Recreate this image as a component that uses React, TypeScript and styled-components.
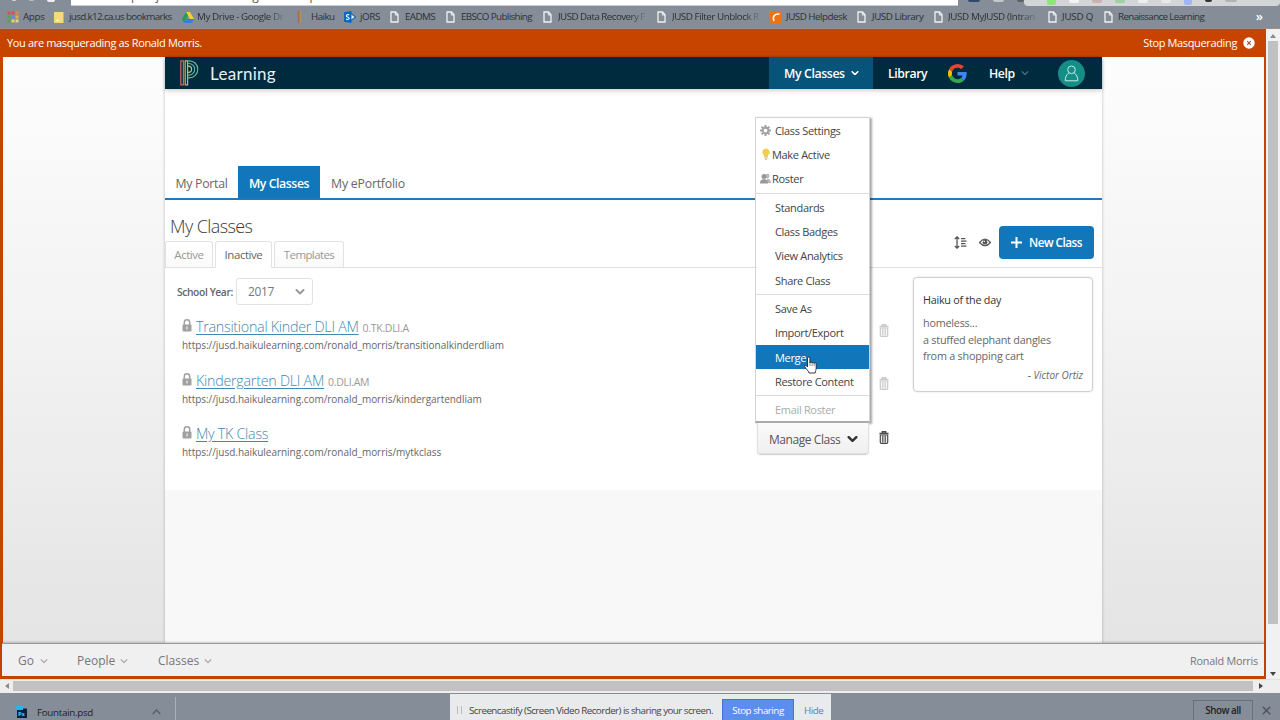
import React from "react";
import styled, { createGlobalStyle, css } from "styled-components";

const Global = createGlobalStyle`
  * { box-sizing: border-box; }
  html, body { margin: 0; padding: 0; }
  body { width: 1280px; height: 720px; overflow: hidden; font-family: "Open Sans", "Noto Sans", sans-serif; font-size: 11px; color: #555; }
`;

const Screen = styled.div`
  width: 1280px; height: 720px; overflow: hidden; display: flex; flex-direction: column; background: #858e98;
`;

/* ---------- browser top ---------- */
const AddressStrip = styled.div`
  height: 6px; flex: none; display: flex; align-items: flex-start; background: #858e98; overflow: hidden;
`;
const BrowserButtons = styled.div`width: 71px; height: 6px; padding-left: 12px; display: flex; gap: 13px;`;
const AddressField = styled.div`
  width: 887px; height: 6px; background: #fff; border-bottom: 1px solid #c3d0d4; position: relative; color: #555;
`;
const AddressText = styled.span`
  position: absolute; left: 44px; top: -12px; font-size: 12px; line-height: 15px; white-space: nowrap;
`;
const ExtensionIcons = styled.div`width: 66px; height: 6px; display: flex; gap: 13px; padding-left: 10px;`;
const ExtensionArea = styled.div`
  width: 256px; height: 6px; background: #d3d5d7; border-radius: 0 0 4px 4px;
  display: flex; align-items: flex-start; gap: 13px; padding-left: 23px;
`;
const Chip = styled.i<{ $c: string; $w?: number; $h?: number }>`
  width: ${p => p.$w ?? 10}px; height: ${p => p.$h ?? 3}px; background: ${p => p.$c}; border-radius: 0 0 2px 2px;
`;
const BookmarkBar = styled.div`
  height: 23px; flex: none; display: flex; align-items: center; padding: 0 0 0 7px; background: #858e98;
  border-bottom: 1px solid #a08c84;
`;
const Bookmark = styled.div<{ $w: number }>`
  width: ${p => p.$w}px; flex: none; display: flex; align-items: center; color: #2d3034;
`;
const BookmarkIcon = styled.span<{ $gap: number }>`
  width: ${p => p.$gap}px; flex: none; display: flex; svg { display: block; }
`;
const BookmarkLabel = styled.span<{ $ls: number; $fade?: boolean }>`
  font-size: 9.8px; line-height: 14px; letter-spacing: ${p => p.$ls}px; white-space: nowrap;
  ${p => p.$fade && css`mask-image: linear-gradient(to right, #000 82%, rgba(0,0,0,.25) 100%);`}
`;
const Overflow = styled.span`margin-left: auto; padding: 0 17px 2px 0; color: #fff; font-size: 13px; line-height: 14px; font-weight: 600;`;

const PageGlyph = () => (
  <svg width="9" height="12" viewBox="0 0 9 12"><path d="M1 1h4.500L8 3.800V11H1z" fill="none" stroke="#f0f1f2" strokeWidth="1.300" /><path d="M5.300 1v3H8" fill="none" stroke="#f0f1f2" /></svg>
);
const AppsGlyph = () => (
  <svg width="12" height="12" viewBox="0 0 12 12">
    {["#d9534a", "#d9534a", "#e08a4a", "#56a356", "#5f8fe0", "#e0b04a", "#56a356", "#f0d060", "#e6d68a"].map((c, i) => (
      <rect key={i} x={(i % 3) * 4 + 0.5} y={Math.floor(i / 3) * 4 + 0.5} width="3" height="3" fill={c} />
    ))}
  </svg>
);
const FolderGlyph = () => (
  <svg width="10" height="11" viewBox="0 0 10 11"><path d="M0 0h9.500v11H0z" fill="#f6d978" /><path d="M2 8.500h3" stroke="#fff6d0" /></svg>
);
const DriveGlyph = () => (
  <svg width="12" height="11" viewBox="0 0 12 11"><path d="M4 0h4l4 7H8z" fill="#f7cf3c" /><path d="M4 0 0 7l2 4 4-7.300z" fill="#1f9f5b" /><path d="M3.800 7H12l-2 4H2z" fill="#3f78e0" /></svg>
);
const HaikuGlyph = () => (
  <svg width="9" height="12" viewBox="0 0 9 12"><path d="M2.500 0v12" stroke="#a8695f" strokeWidth="1.600" /><path d="M4.500 0v12" stroke="#a59a62" /><path d="M5 1c4 0 4 6 0 6" stroke="#6d9c86" fill="none" /></svg>
);
const SharePointGlyph = () => (
  <svg width="12" height="12" viewBox="0 0 12 12"><path d="M7 2.500 11.500 6 7 9.500" fill="#fff" stroke="#1572c4" strokeWidth="1.400" /><path d="M0 1.200 7.500 0v12L0 10.800z" fill="#0668c0" /><path d="M5.300 4C3.800 3.200 2 4 2.500 5.200S5.600 6.500 5.200 7.600 3 8.600 2 7.900" fill="none" stroke="#fff" strokeWidth="1.100" /></svg>
);
const HelpdeskGlyph = () => (
  <svg width="12" height="12" viewBox="0 0 12 12"><rect width="12" height="12" rx="1" fill="#f4720e" /><path d="M4 10C2 5 5 2.500 9.500 3" fill="none" stroke="#fff" strokeWidth="1.500" /></svg>
);

type Mark = { label: string; w: number; gap: number; icon: React.FC; ls: number; fade?: boolean };
const marks: Mark[] = [
  { label: "Apps", w: 47, gap: 16, icon: AppsGlyph, ls: -0.35 },
  { label: "jusd.k12.ca.us bookmarks", w: 128, gap: 15, icon: FolderGlyph, ls: -0.64 },
  { label: "My Drive - Google Dr", w: 114, gap: 15, icon: DriveGlyph, ls: -0.4, fade: true },
  { label: "Haiku", w: 48, gap: 15, icon: HaikuGlyph, ls: -0.55 },
  { label: "jORS", w: 46, gap: 16, icon: SharePointGlyph, ls: -0.4 },
  { label: "EADMS", w: 56, gap: 15, icon: PageGlyph, ls: -0.6 },
  { label: "EBSCO Publishing", w: 97, gap: 15, icon: PageGlyph, ls: -0.62 },
  { label: "JUSD Data Recovery F", w: 114, gap: 15, icon: PageGlyph, ls: -0.55, fade: true },
  { label: "JUSD Filter Unblock R", w: 113, gap: 15, icon: PageGlyph, ls: -0.45, fade: true },
  { label: "JUSD Helpdesk", w: 87, gap: 16, icon: HelpdeskGlyph, ls: -0.5 },
  { label: "JUSD Library", w: 77, gap: 15, icon: PageGlyph, ls: -0.45 },
  { label: "JUSD MyJUSD (Intran", w: 114, gap: 14, icon: PageGlyph, ls: -0.37, fade: true },
  { label: "JUSD Q", w: 56, gap: 14, icon: PageGlyph, ls: -0.2 },
  { label: "Renaissance Learning", w: 110, gap: 14, icon: PageGlyph, ls: -0.64 },
];

/* ---------- web page frame ---------- */
const Viewport = styled.div`height: 650px; flex: none; display: flex;`;
const Site = styled.div`
  width: 1266px; height: 650px; display: flex; flex-direction: column; background: #c74400; padding: 0 2px 3px 3px;
`;
const MasqueradeBar = styled.div`
  height: 28px; flex: none; display: flex; align-items: center; justify-content: space-between;
  padding: 0 9px 1px 4px; color: #fff; font-size: 11px;
`;
const StopLink = styled.div`display: flex; align-items: center; gap: 6px;`;
const Label = styled.span<{ $ls?: number }>`letter-spacing: ${p => p.$ls ?? 0}px; white-space: nowrap;`;

const Backdrop = styled.div`
  height: 586px; flex: none; display: flex; justify-content: flex-start; padding-left: 162px;
  background: linear-gradient(#fdfdfd, #f3f3f3 45%, #e4e4e4);
`;
const Column = styled.div`
  width: 937px; height: 586px; background: #f8f8f8; box-shadow: 0 0 3px rgba(0,0,0,.25); position: relative; display: flex; flex-direction: column;
`;
const NavBar = styled.header`
  height: 32px; flex: none; background: #002b3e; display: flex; align-items: center; color: #fff; padding-left: 15px;
  font-size: 12.300px; font-weight: 600; box-shadow: 0 2px 4px rgba(0,0,0,.18); z-index: 1;
`;
const Brand = styled.div`display: flex; align-items: center; gap: 11px; width: 589px;`;
const BrandName = styled.span`font-family: Lato, sans-serif; font-weight: 400; font-size: 17px; line-height: 20px; letter-spacing: 0.3px; padding-top: 2px; color: #e8f0f2;`;
const NavItem = styled.div<{ $w: number; $pad: number; $active?: boolean; $gap?: number }>`
  width: ${p => p.$w}px; height: 32px; padding-left: ${p => p.$pad}px; display: flex; align-items: center; gap: ${p => p.$gap ?? 6}px;
  background: ${p => (p.$active ? "#065479" : "transparent")};
  svg { flex: none; }
`;
const Avatar = styled.div`
  width: 27px; height: 27px; border-radius: 50%; background: #138f86; display: flex; align-items: center; justify-content: center;
`;

const Main = styled.main`height: 401px; flex: none; background: #fff; display: flex; flex-direction: column;`;
const PortalTabs = styled.nav`
  margin-top: 77px; height: 34px; flex: none; display: flex; border-bottom: 2px solid #2478b4;
`;
const PortalTab = styled.div<{ $w: number; $active?: boolean }>`
  width: ${p => p.$w}px; height: 32px; display: flex; align-items: center; justify-content: center; padding-top: 2px;
  font-size: 12.300px; color: ${p => (p.$active ? "#fff" : "#666")}; background: ${p => (p.$active ? "#1276ba" : "transparent")};
  font-weight: ${p => (p.$active ? 600 : 400)};
`;
const TitleRow = styled.div`
  height: 68px; flex: none; display: flex; justify-content: space-between; border-bottom: 1px solid #dfdfdf;
`;
const TitleSide = styled.div`display: flex; flex-direction: column; justify-content: space-between; padding-top: 14px;`;
const Title = styled.h1`margin: 0 0 0 5px; font-weight: 300; font-size: 18px; line-height: 24px; color: #3a3a3a;`;
const SubTabs = styled.div`display: flex; gap: 2px; margin-bottom: -1px;`;
const SubTab = styled.div<{ $w: number; $active?: boolean }>`
  width: ${p => p.$w}px; height: 27px; border: 1px solid #e2e2e2; border-bottom-color: ${p => (p.$active ? "#fff" : "#dfdfdf")};
  border-radius: 3px 3px 0 0; background: ${p => (p.$active ? "#fff" : "linear-gradient(#fff,#fafafa)")};
  display: flex; align-items: center; justify-content: center; font-size: 11.500px; color: ${p => (p.$active ? "#666" : "#999")};
`;
const Tools = styled.div`display: flex; align-items: center; padding: 0 8px 0 0; height: 84px;`;
const EyeBox = styled.span`margin-left: 12px; display: flex;`;
const NewClass = styled.div`
  width: 95px; height: 33px; border-radius: 4px; background: #1276ba; color: #fff; font-size: 11.800px; font-weight: 600;
  display: flex; align-items: center; gap: 7px; padding-left: 12px; margin-left: 8px;
`;
const Body = styled.div`flex: 1; display: flex; justify-content: space-between;`;
const Listing = styled.section`width: 724px; padding: 10px 0 0 12px;`;
const YearRow = styled.div`display: flex; align-items: center; gap: 3px; height: 27px; margin-bottom: 11.300px; font-size: 10.300px; font-weight: 600; color: #666;`;
const YearSelect = styled.div`
  width: 77px; height: 27px; border: 1px solid #e2e2e2; border-radius: 3px; display: flex; align-items: center;
  justify-content: space-between; padding: 0 7px 0 11px; font-size: 12px; font-weight: 400; color: #777;
`;
const ClassRow = styled.article`height: 53.400px; display: flex; justify-content: space-between; padding-left: 5px;`;
const ClassInfo = styled.div`display: flex; flex-direction: column;`;
const ClassHead = styled.div`display: flex; align-items: baseline; height: 21px; line-height: 21px;`;
const LockBox = styled.span`width: 14px; svg { display: block; }`;
const ClassLink = styled.a`color: #3f88b3; font-size: 14.300px; font-weight: 300; text-decoration: underline; text-underline-offset: 2px;`;
const ClassCode = styled.span`margin-left: 4px; font-size: 10.500px; color: #999; letter-spacing: -0.3px;`;
const ClassUrl = styled.div`font-size: 10px; line-height: 16px; color: #666;`;
const TrashBox = styled.span<{ $dim?: boolean }>`color: ${p => (p.$dim ? "#c9c9c9" : "#4a4a4a")}; padding-top: 7.700px;`;

const HaikuCard = styled.aside`
  width: 180px; height: 115px; margin: 9px 9px 0 0; border: 1px solid #cfcfcf; border-radius: 4px; padding: 13px 9px 0;
  display: flex; flex-direction: column; box-shadow: 0 0 2px rgba(0,0,0,.15); color: #666; font-size: 10.800px; line-height: 16.500px; letter-spacing: -0.220px;
`;
const HaikuTitle = styled.div`color: #333; line-height: 17px; margin-bottom: 7px;`;
const HaikuLine = styled.div`white-space: nowrap;`;
const HaikuAuthor = styled.div`text-align: right; font-style: italic; font-size: 10px; letter-spacing: 0; margin-top: 2px;`;

/* ---------- class menu, floats over the page ---------- */
const MenuLayer = styled.div`position: absolute; left: 590px; top: 60px; width: 115px; z-index: 3;`;
const Menu = styled.div`
  border: 1px solid #d4d4d4; border-bottom: 2px solid #aaa; background: #fff; box-shadow: 2px 1px 2px rgba(0,0,0,.35); height: 306px;
  letter-spacing: -0.320px;
`;
const MenuItem = styled.div<{ $kind?: "active" | "muted"; $icon?: boolean }>`
  height: 24.400px; display: flex; align-items: center; font-size: 11px; padding: 0 0 .300px ${p => (p.$icon ? 4 : 19)}px;
  color: ${p => (p.$kind === "active" ? "#fff" : p.$kind === "muted" ? "#aaa" : "#444")};
  background: ${p => (p.$kind === "active" ? "#1276ba" : "transparent")};
`;
const MenuIcon = styled.span<{ $w: number }>`width: ${p => p.$w}px; display: flex;`;
const Rule = styled.div`height: 1px; margin: 1.400px 0; background: #dcdcdc;`;
const ManageButton = styled.div`
  margin-left: 2px; width: 112px; height: 31px; border: 1px solid #e0e0e0; border-top: 0; border-radius: 0 0 4px 4px; background: linear-gradient(#fafafa, #f0f0f0);
  box-shadow: 0 1px 1px #ccc; display: flex; align-items: center; gap: 7px; padding: 2px 0 0 11px; font-size: 12px; color: #555;
`;
const Pointer = styled.div`position: absolute; left: 49px; top: 239px;`;

/* ---------- bottom ---------- */
const Dock = styled.footer`
  height: 33px; flex: none; background: #f0f0f0; border-top: 1px solid #999; margin-left: -1px; box-shadow: 0 -1px 2px rgba(0,0,0,.2); z-index: 2;
  display: flex; align-items: center; padding: 0 6px 0 16px; font-size: 12px; color: #777;
`;
const DockItem = styled.div<{ $w: number; $gap: number }>`width: ${p => p.$w}px; display: flex; align-items: center; gap: ${p => p.$gap}px; svg { margin-top: 3px; }`;
const DockUser = styled.div`margin-left: auto; font-size: 10.800px;`;

const VScroll = styled.div`width: 14px; background: #f1f1f1; display: flex; flex-direction: column; align-items: center; padding: 5px 0 3px;`;
const VThumb = styled.div`width: 10px; height: 583px; background: #c1c1c1; margin: 3px 0 auto;`;
const HScroll = styled.div`
  height: 14px; flex: none; background: #eee; border-top: 1px solid #f6dccb; display: flex; align-items: center; padding: 0 17px 2px 5px;
`;
const HThumb = styled.div`width: 1240px; height: 10px; background: #c1c1c1; margin: 0 auto 0 4px;`;

const Shelf = styled.div`height: 27px; flex: none; display: flex; background: #858e98; font-size: 9.800px;`;
const Download = styled.div`
  width: 176px; height: 23px; margin-top: 4px; border-right: 1px solid #aab1b8; display: flex; align-items: center; padding: 7px 14px 0 15px; color: #222; gap: 10px;
  svg:last-child { margin-left: auto; }
`;
const ShareBanner = styled.div`
  margin-left: 274px; width: 381px; height: 26px; margin-top: 1px; background: #e9eaec; display: flex; align-items: center; padding: 6px 0 0 7px; color: #444;
`;
const Grip = styled.i`width: 5px; height: 8px; border: solid #b9bbbd; border-width: 0 1px; margin-right: 7px;`;
const StopSharing = styled.div`
  width: 72px; height: 22px; margin: 0 10px 0 auto; background: #5b8eed; border: 1px solid #4474d0; color: #fff; display: flex; align-items: center; justify-content: center;
`;
const HideLink = styled.span`width: 27px; color: #5b7ccb; letter-spacing: -0.500px;`;
const ShowAll = styled.div`
  width: 60px; height: 20px; margin: 7px 0 0 auto; border: 1px solid #69717a; border-bottom: 0; color: #222; display: flex; justify-content: center; padding-top: 3px; font-weight: 600;
`;
const CloseShelf = styled.div`padding: 13px 9px 0 9px; svg { display: block; }`;

const Chevron = ({ size = 8, color = "#fff", weight = 1.6 }: { size?: number; color?: string; weight?: number }) => (
  <svg width={size} height={size * 0.6} viewBox="0 0 10 6"><path d="M1.500 1 5 4.500 8.500 1" fill="none" stroke={color} strokeWidth={weight} strokeLinecap="round" strokeLinejoin="round" /></svg>
);
const Lock = () => (
  <svg width="10" height="13" viewBox="0 0 10 13"><path d="M2.300 6V3.500a2.700 2.700 0 0 1 5.400 0V6" fill="none" stroke="#a0a0a3" strokeWidth="1.500" /><rect x="0.500" y="5.500" width="9" height="7" rx="1" fill="#a0a0a3" /><path d="M5 7.500v3" stroke="#eee" strokeWidth="1.200" /></svg>
);
const Trash = () => (
  <svg width="10" height="13" viewBox="0 0 10 13"><path d="M3.300 1.800V.8h3.400v1M.5 2.500h9" stroke="currentColor" fill="none" strokeWidth="1.400" /><path d="M1.300 4h7.400v7.500q0 .8-.8.8H2.100q-.8 0-.8-.8z" fill="none" stroke="currentColor" strokeWidth="1.200" /><path d="M3.400 4.500v7M5 4.500v7M6.600 4.500v7" stroke="currentColor" strokeWidth=".9" /></svg>
);
const Logo = () => (
  <svg width="19" height="26" viewBox="0 0 19 26" fill="none" strokeWidth="1.200">
    <path d="M.8.800h2.600v24H.8z" stroke="#c96a5b" /><path d="M5.200 .8h2.400v24H5.200z" stroke="#d9ae52" />
    <path d="M7.600.8h1.700a8.500 8.500 0 0 1 0 17H7.600" stroke="#62b894" /><path d="M7.600 3.500h1.300a5.800 5.800 0 0 1 0 11.600H7.600" stroke="#58b3a8" /><path d="M7.600 6.200h.9a3.100 3.100 0 0 1 0 6.200h-.9" stroke="#b9c972" />
  </svg>
);
const Google = () => (
  <svg width="19" height="19" viewBox="0 0 48 48">
    <path fill="#EA4335" d="M24 9.500c3.540 0 6.710 1.220 9.210 3.600l6.850-6.850C35.900 2.380 30.470 0 24 0 14.620 0 6.510 5.380 2.560 13.220l7.980 6.190C12.430 13.720 17.740 9.500 24 9.500z" />
    <path fill="#4285F4" d="M46.980 24.550c0-1.570-.15-3.090-.38-4.550H24v9.020h12.940c-.58 2.960-2.260 5.480-4.780 7.180l7.730 6c4.510-4.180 7.090-10.360 7.090-17.650z" />
    <path fill="#FBBC05" d="M10.530 28.590c-.48-1.450-.76-2.990-.76-4.590s.27-3.140.76-4.590l-7.980-6.190C.92 16.460 0 20.120 0 24c0 3.880.92 7.540 2.560 10.780l7.970-6.190z" />
    <path fill="#34A853" d="M24 48c6.480 0 11.930-2.130 15.890-5.810l-7.730-6c-2.150 1.450-4.920 2.300-8.160 2.300-6.260 0-11.570-4.220-13.470-9.910l-7.980 6.190C6.510 42.620 14.620 48 24 48z" />
  </svg>
);
const Person = () => (
  <svg width="15" height="17" viewBox="0 0 15 17" fill="none" stroke="#c5ece6" strokeWidth="1"><circle cx="7.500" cy="4.800" r="3.800" /><path d="M4.800 8C2.500 9.500 1.200 12 1.200 15.800h12.600c0-3.800-1.300-6.300-3.600-7.800" /></svg>
);
const StopGlyph = () => (
  <svg width="12" height="12" viewBox="0 0 12 12"><circle cx="6" cy="6" r="5.700" fill="#fff" /><path d="m4.200 4.200 3.600 3.600M7.800 4.200 4.200 7.800" stroke="#a05030" strokeWidth="1.100" /></svg>
);
const SortGlyph = () => (
  <svg width="13" height="13" viewBox="0 0 12 12" fill="none" stroke="#555" strokeWidth="1.200"><path d="M2.800 1v10M.8 2.800l2-2 2 2M.8 9.200l2 2 2-2M6.500 2.500h4M6.500 4.800h5M6.500 7.100h4M6.500 9.400h5" /></svg>
);
const EyeGlyph = () => (
  <svg width="12" height="9" viewBox="0 0 12 9"><path d="M.5 4.500Q6-2.300 11.500 4.500 6 10.800.5 4.500z" fill="none" stroke="#555" strokeWidth="1.200" /><circle cx="6" cy="4.200" r="2.400" fill="#555" /><circle cx="5.300" cy="3.500" r=".7" fill="#fff" /></svg>
);
const GearGlyph = () => (
  <svg width="11" height="11" viewBox="0 0 11 11"><circle cx="5.500" cy="5.500" r="2.900" fill="none" stroke="#a3a3a3" strokeWidth="2.100" /><path d="M5.500 0v2M5.500 9v2M0 5.500h2M9 5.500h2M1.600 1.600 3 3M8 8l1.400 1.400M9.400 1.600 8 3M3 8 1.600 9.400" stroke="#a3a3a3" strokeWidth="2" /></svg>
);
const BulbGlyph = () => (
  <svg width="11" height="12" viewBox="0 0 11 12"><path d="M6 .5a3.700 3.700 0 0 0-2 6.800V9h4V7.300A3.700 3.700 0 0 0 6 .5z" fill="#f2cd55" /><path d="M4.200 10h3.600M5 11.300h2" stroke="#c9b98a" /></svg>
);
const RosterGlyph = () => (
  <svg width="11" height="11" viewBox="0 0 11 11"><circle cx="7.300" cy="3" r="2.200" fill="#b9b9b9" /><path d="M7 5.500c3 .3 4 2 4 4.500H7z" fill="#b9b9b9" /><circle cx="4" cy="3.500" r="2.500" fill="#999" /><path d="M0 10.500C0 8 1 6.800 3 6.300h2c2 .5 3 1.700 3 4.200z" fill="#999" /></svg>
);
const HandGlyph = () => (
  <svg width="13" height="18" viewBox="0 0 13 18"><path d="M3.500 11V2.200a1.200 1.200 0 0 1 2.400 0V7a1.100 1.100 0 0 1 2.200.2 1.100 1.100 0 0 1 2.100.4 1 1 0 0 1 2 .5V12c0 2.500-1 3-1 5H5c0-1.500-2.500-3.500-4.200-6.200C0 9.300 1.600 8.600 2.500 9.700z" fill="#fff" stroke="#222" strokeWidth=".9" /><path d="M6 7v3M8.100 7.500V10M10.200 8v2" stroke="#444" strokeWidth=".6" /></svg>
);
const PsdGlyph = () => (
  <svg width="12" height="12" viewBox="0 0 12 12"><rect x="1" y="0" width="8" height="4" fill="#28b5ef" /><rect x="2" y="2.500" width="10" height="9.500" fill="#06203d" /><path d="M0 3h8" stroke="#28b5ef" strokeWidth="2" /><text x="3" y="10" fontSize="6" fontWeight="700" fontFamily="Open Sans" fill="#5cc8f4">Ps</text></svg>
);

const classes = [
  { name: "Transitional Kinder DLI AM", ls: -0.27, code: "0.TK.DLI.A", url: "https://jusd.haikulearning.com/ronald_morris/transitionalkinderdliam", dim: true },
  { name: "Kindergarten DLI AM", ls: -0.26, code: "0.DLI.AM", url: "https://jusd.haikulearning.com/ronald_morris/kindergartendliam", dim: true },
  { name: "My TK Class", ls: -0.27, code: "", url: "https://jusd.haikulearning.com/ronald_morris/mytkclass", dim: false },
];

export default function App() {
  return (
    <Screen>
      <Global />
      <AddressStrip>
        <BrowserButtons><Chip $c="#d5d8db" $w={4} $h={1} /><Chip $c="#b5babf" $w={5} $h={1} /><Chip $c="#eef0f1" $w={8} $h={2} /></BrowserButtons>
        <AddressField><AddressText>https://jusd.haikulearning.com/do/portal</AddressText></AddressField>
        <ExtensionIcons><Chip $c="#33486f" $w={12} $h={2} /><Chip $c="#c5c8ca" $w={12} $h={2} /><Chip $c="#5d6166" $w={7} $h={2} /></ExtensionIcons>
        <ExtensionArea>
          <Chip $c="#8fe57c" $w={9} $h={5} /><Chip $c="#f2f2f2" /><Chip $c="#cdb0b0" /><Chip $c="#9fd09f" /><Chip $c="#eee" /><Chip $c="#e8e8e8" />
          <Chip $c="#9fb8f5" $w={8} $h={5} /><Chip $c="#333" $w={7} $h={2} /><Chip $c="#b0b2b4" $w={12} $h={2} />
        </ExtensionArea>
      </AddressStrip>
      <BookmarkBar>
        {marks.map(m => (
          <Bookmark key={m.label} $w={m.w}>
            <BookmarkIcon $gap={m.gap}><m.icon /></BookmarkIcon>
            <BookmarkLabel $ls={m.ls} $fade={m.fade}>{m.label}</BookmarkLabel>
          </Bookmark>
        ))}
        <Overflow>»</Overflow>
      </BookmarkBar>
      <Viewport>
        <Site>
          <MasqueradeBar>
            <Label $ls={-0.35}>You are masquerading as Ronald Morris.</Label>
            <StopLink><Label $ls={-0.36}>Stop Masquerading</Label><StopGlyph /></StopLink>
          </MasqueradeBar>
          <Backdrop>
            <Column>
              <NavBar>
                <Brand><Logo /><BrandName>Learning</BrandName></Brand>
                <NavItem $w={104} $pad={15} $active><Label $ls={-0.38}>My Classes</Label><Chevron weight={2} /></NavItem>
                <NavItem $w={75} $pad={15}><Label $ls={-0.4}>Library</Label></NavItem>
                <NavItem $w={41} $pad={0}><Google /></NavItem>
                <NavItem $w={69} $pad={0}><Label $ls={-0.45}>Help</Label><Chevron color="#4d6f80" /></NavItem>
                <Avatar><Person /></Avatar>
              </NavBar>
              <Main>
                <PortalTabs>
                  <PortalTab $w={73}><Label $ls={-0.28}>My Portal</Label></PortalTab>
                  <PortalTab $w={82} $active><Label $ls={-0.43}>My Classes</Label></PortalTab>
                  <PortalTab $w={96}><Label $ls={-0.22}>My ePortfolio</Label></PortalTab>
                </PortalTabs>
                <TitleRow>
                  <TitleSide>
                    <Title><Label $ls={-0.6}>My Classes</Label></Title>
                    <SubTabs>
                      <SubTab $w={48}><Label $ls={-0.45}>Active</Label></SubTab>
                      <SubTab $w={57} $active><Label $ls={-0.45}>Inactive</Label></SubTab>
                      <SubTab $w={70}><Label $ls={-0.6}>Templates</Label></SubTab>
                    </SubTabs>
                  </TitleSide>
                  <Tools>
                    <SortGlyph /><EyeBox><EyeGlyph /></EyeBox>
                    <NewClass>
                      <svg width="11" height="11" viewBox="0 0 11 11"><path d="M5.500 0v11M0 5.500h11" stroke="#fff" strokeWidth="2" /></svg>
                      <Label $ls={-0.55}>New Class</Label>
                    </NewClass>
                  </Tools>
                </TitleRow>
                <Body>
                  <Listing>
                    <YearRow><Label $ls={-0.4}>School Year:</Label><YearSelect><Label $ls={-0.3}>2017</Label><Chevron size={10} color="#999" weight={2} /></YearSelect></YearRow>
                    {classes.map(c => (
                      <ClassRow key={c.name}>
                        <ClassInfo>
                          <ClassHead><LockBox><Lock /></LockBox><ClassLink><Label $ls={c.ls}>{c.name}</Label></ClassLink><ClassCode>{c.code}</ClassCode></ClassHead>
                          <ClassUrl><Label $ls={-0.03}>{c.url}</Label></ClassUrl>
                        </ClassInfo>
                        <TrashBox $dim={c.dim}><Trash /></TrashBox>
                      </ClassRow>
                    ))}
                  </Listing>
                  <HaikuCard>
                    <HaikuTitle><Label $ls={-0.25}>Haiku of the day</Label></HaikuTitle>
                    <HaikuLine>homeless...</HaikuLine>
                    <HaikuLine>a stuffed elephant dangles</HaikuLine>
                    <HaikuLine>from a shopping cart</HaikuLine>
                    <HaikuAuthor>- Victor Ortiz</HaikuAuthor>
                  </HaikuCard>
                </Body>
              </Main>
              <MenuLayer>
                <Menu>
                  <MenuItem $icon><MenuIcon $w={15}><GearGlyph /></MenuIcon>Class Settings</MenuItem>
                  <MenuItem $icon><MenuIcon $w={12}><BulbGlyph /></MenuIcon>Make Active</MenuItem>
                  <MenuItem $icon><MenuIcon $w={12}><RosterGlyph /></MenuIcon>Roster</MenuItem>
                  <Rule />
                  <MenuItem>Standards</MenuItem><MenuItem>Class Badges</MenuItem><MenuItem>View Analytics</MenuItem><MenuItem>Share Class</MenuItem>
                  <Rule />
                  <MenuItem>Save As</MenuItem><MenuItem>Import/Export</MenuItem><MenuItem $kind="active">Merge</MenuItem><MenuItem>Restore Content</MenuItem>
                  <Rule />
                  <MenuItem $kind="muted">Email Roster</MenuItem>
                </Menu>
                <ManageButton><Label $ls={-0.43}>Manage Class</Label><Chevron size={11} color="#333" weight={2.200} /></ManageButton>
                <Pointer><HandGlyph /></Pointer>
              </MenuLayer>
            </Column>
          </Backdrop>
          <Dock>
            <DockItem $w={59} $gap={6}><Label>Go</Label><Chevron color="#aaa" /></DockItem>
            <DockItem $w={81} $gap={5}><Label>People</Label><Chevron color="#aaa" /></DockItem>
            <DockItem $w={81} $gap={5}><Label>Classes</Label><Chevron color="#aaa" /></DockItem>
            <DockUser><Label $ls={-0.22}>Ronald Morris</Label></DockUser>
          </Dock>
        </Site>
        <VScroll>
          <svg width="6" height="4" viewBox="0 0 6 4"><path d="M0 4 3 0l3 4z" fill="#8a8a8a" /></svg>
          <VThumb />
          <svg width="6" height="4" viewBox="0 0 6 4"><path d="M0 0 3 4 6 0z" fill="#444" /></svg>
        </VScroll>
      </Viewport>
      <HScroll>
        <svg width="4" height="6" viewBox="0 0 4 6"><path d="M4 0 0 3l4 3z" fill="#8a8a8a" /></svg>
        <HThumb />
        <svg width="4" height="6" viewBox="0 0 4 6"><path d="M0 0 4 3 0 6z" fill="#444" /></svg>
      </HScroll>
      <Shelf>
        <Download><PsdGlyph /><Label $ls={-0.3}>Fountain.psd</Label><svg width="9" height="6" viewBox="0 0 9 6"><path d="m.8 5 3.700-4 3.700 4" fill="none" stroke="#565d65" strokeWidth="1.300" /></svg></Download>
        <ShareBanner><Grip /><Label $ls={-0.54}>Screencastify (Screen Video Recorder) is sharing your screen.</Label><StopSharing><Label $ls={-0.48}>Stop sharing</Label></StopSharing><HideLink>Hide</HideLink></ShareBanner>
        <ShowAll><Label $ls={-0.5}>Show all</Label></ShowAll>
        <CloseShelf><svg width="9" height="9" viewBox="0 0 9 9"><path d="m.8.800 7.400 7.400M8.200.8.800 8.200" stroke="#50565d" strokeWidth="1.600" /></svg></CloseShelf>
      </Shelf>
    </Screen>
  );
}
